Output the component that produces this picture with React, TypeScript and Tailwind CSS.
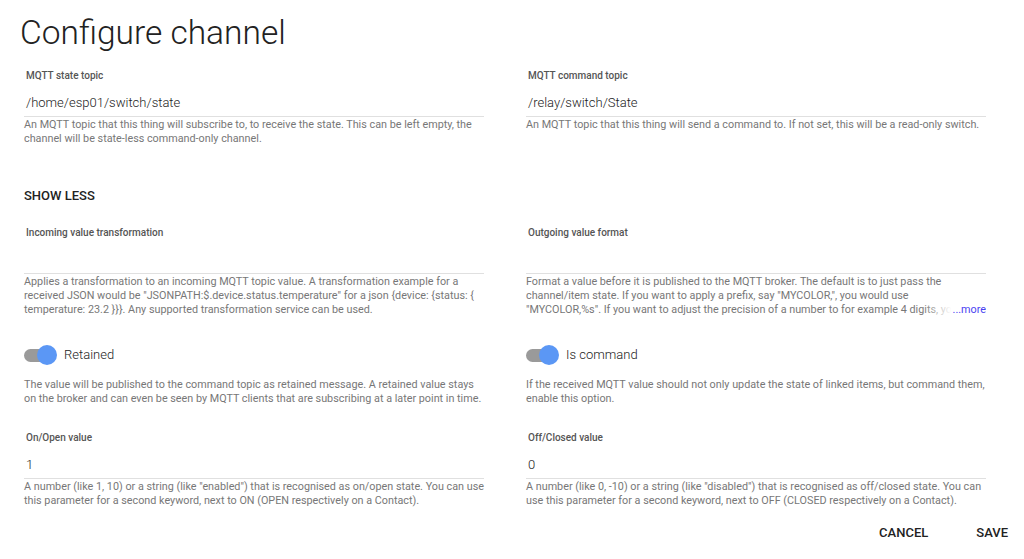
import React from "react";

const font = "font-['Roboto','Liberation_Sans',sans-serif]";
const helpCls = "text-[10.8px] leading-[14px] text-[#777]";

function TextField({ label, value, help }: { label: string; value: string; help: string }) {
  return (
    <div>
      <div className="text-[10px] leading-[14px] font-medium text-[#555] pl-[2px]">{label}</div>
      <div className="mt-[10px] pb-[3px] h-[24px] leading-[20px] text-[13px] font-light text-[#222] pl-[2px] border-b border-[#e0e0e0]">
        {value}
      </div>
      <p className={`pt-[1px] ${helpCls}`}>{help}</p>
    </div>
  );
}

function Toggle({ label }: { label: string }) {
  return (
    <div className="flex items-center h-[20px]">
      <div className="relative w-[33px] h-[20px] flex items-center">
        <div className="w-[30px] h-[13px] rounded-full bg-[#9a9a9a]" />
        <div className="absolute right-0 top-0 w-[20px] h-[20px] rounded-full bg-[#5b97f5]" />
      </div>
      <span className="ml-[7px] text-[13px] font-light text-[#222]">{label}</span>
    </div>
  );
}

export default function App() {
  return (
    <main className={`min-h-screen bg-white ${font}`}>
      <h1 className="pt-[13px] pl-[20px] text-[33.5px] leading-[40px] font-light text-[#222]">Configure channel</h1>

      <div className="pl-[24px] pr-[38px] mt-[16px]">
        <div className="grid grid-cols-2 gap-x-[42px]">
          <TextField
            label="MQTT state topic"
            value="/home/esp01/switch/state"
            help="An MQTT topic that this thing will subscribe to, to receive the state. This can be left empty, the channel will be state-less command-only channel."
          />
          <TextField
            label="MQTT command topic"
            value="/relay/switch/State"
            help="An MQTT topic that this thing will send a command to. If not set, this will be a read-only switch."
          />
        </div>

        <button className="mt-[40px] h-[20px] leading-[20px] text-[13px] font-medium text-[#222] uppercase">Show less</button>

        <div className="grid grid-cols-2 gap-x-[42px] mt-[19px]">
          <TextField
            label="Incoming value transformation"
            value=""
            help={'Applies a transformation to an incoming MQTT topic value. A transformation example for a received JSON would be "JSONPATH:$.device.status.temperature" for a json {device: {status: { temperature: 23.2 }}}. Any supported transformation service can be used.'}
          />
          <div>
            <div className="text-[10px] leading-[14px] font-medium text-[#555] pl-[2px]">Outgoing value format</div>
            <div className="mt-[10px] pb-[3px] h-[24px] border-b border-[#e0e0e0]" />
            <div className="relative pt-[1px] h-[43px] overflow-hidden">
              <p className={helpCls}>
                Format a value before it is published to the MQTT broker. The default is to just pass the channel/item state. If you want to apply a prefix, say "MYCOLOR,", you would use "MYCOLOR,%s". If you want to adjust the precision of a number to for example 4 digits, you would use "%.4f".
              </p>
              <span className="absolute right-0 top-[29px] pl-[30px] text-[10.8px] leading-[14px] text-[#4a3ff2] bg-linear-to-r from-transparent via-white via-45% to-white">
                ...more
              </span>
            </div>
          </div>
        </div>

        <div className="grid grid-cols-2 gap-x-[42px] mt-[28px]">
          <div>
            <Toggle label="Retained" />
            <p className={`mt-[13px] ${helpCls}`}>
              The value will be published to the command topic as retained message. A retained value stays on the broker and can even be seen by MQTT clients that are subscribing at a later point in time.
            </p>
          </div>
          <div>
            <Toggle label="Is command" />
            <p className={`mt-[13px] ${helpCls}`}>
              If the received MQTT value should not only update the state of linked items, but command them, enable this option.
            </p>
          </div>
        </div>

        <div className="grid grid-cols-2 gap-x-[42px] mt-[25px]">
          <TextField
            label="On/Open value"
            value="1"
            help={'A number (like 1, 10) or a string (like "enabled") that is recognised as on/open state. You can use this parameter for a second keyword, next to ON (OPEN respectively on a Contact).'}
          />
          <TextField
            label="Off/Closed value"
            value="0"
            help={'A number (like 0, -10) or a string (like "disabled") that is recognised as off/closed state. You can use this parameter for a second keyword, next to OFF (CLOSED respectively on a Contact).'}
          />
        </div>
      </div>

      <div className="flex justify-end gap-4 mt-[7px]">
        <button className="px-4 h-[36px] text-[13px] font-medium text-[#222] uppercase">Cancel</button>
        <button className="px-4 h-[36px] text-[13px] font-medium text-[#222] uppercase">Save</button>
      </div>
    </main>
  );
}
